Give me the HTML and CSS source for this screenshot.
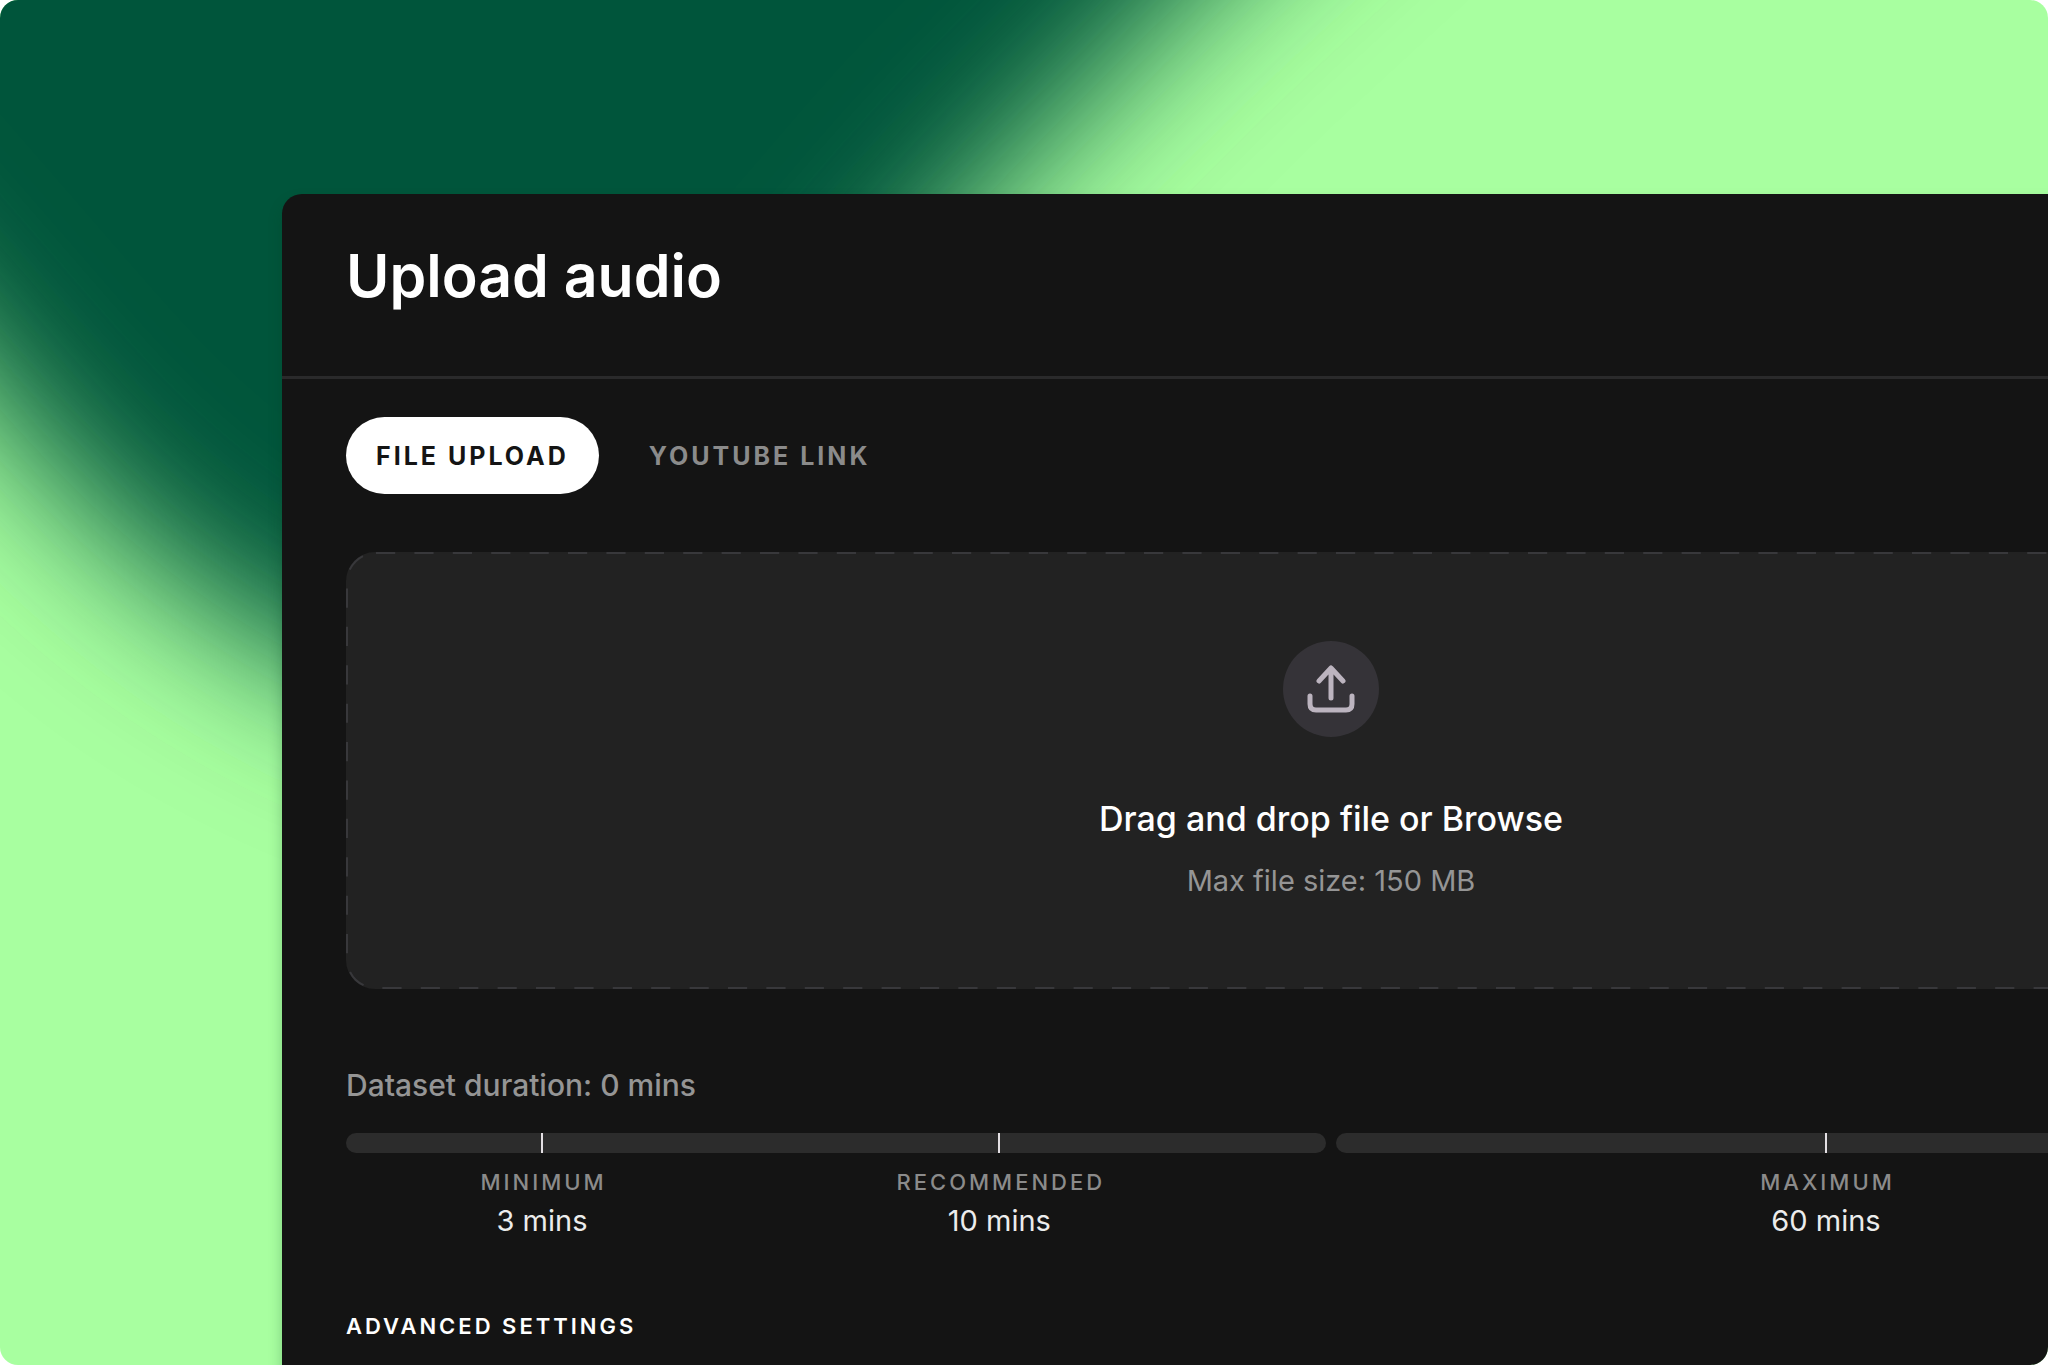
FILE: index.html
```html
<!DOCTYPE html>
<html lang="en">
<head>
    <meta charset="UTF-8">
    <meta name="viewport" content="width=device-width, initial-scale=1.0">
    <title>Upload audio</title>
    <link rel="stylesheet" href="styles.css">
</head>
<body>
    <div class="stage">
        <svg class="backdrop" aria-hidden="true">
            <defs>
                <filter id="soften" filterUnits="userSpaceOnUse" x="-900" y="-800" width="3000" height="2400">
                    <feGaussianBlur stdDeviation="76"/>
                </filter>
            </defs>
            <path d="M-700 -600 H1830 L1180 0 L985 195 L740 480 L680 730 H480 Q300 680 150 560 Q70 495 0 410 L-200 180 L-700 -300 Z" fill="#00543a" filter="url(#soften)"/>
        </svg>

        <main class="panel">
            <header class="panel-header">
                <h1>Upload audio</h1>
            </header>

            <div class="panel-body">
                <div class="tabs" role="tablist">
                    <button class="tab active" type="button" role="tab" aria-selected="true">File upload</button>
                    <button class="tab" type="button" role="tab" aria-selected="false">YouTube link</button>
                </div>

                <button class="dropzone" type="button">
                    <svg class="dropzone-border" aria-hidden="true">
                        <rect x="0" y="0" width="100%" height="100%" rx="29"/>
                    </svg>
                    <span class="upload-icon">
                        <svg viewBox="0 0 48 48" aria-hidden="true">
                            <path d="M24 33V4M12 16L24 3L36 16M3 31V39Q3 45 9 45H39Q45 45 45 39V31"/>
                        </svg>
                    </span>
                    <span class="dropzone-title">Drag and drop file or Browse</span>
                    <span class="dropzone-hint">Max file size: 150 MB</span>
                </button>

                <section class="duration">
                    <h2>Dataset duration: 0 mins</h2>
                    <div class="scale">
                        <div class="segment">
                            <div class="bar short"><i class="tick"></i><i class="tick"></i></div>
                            <div class="marks short">
                                <div class="mark"><span class="mark-label">Minimum</span><span class="mark-value">3 mins</span></div>
                                <div class="mark"><span class="mark-label">Recommended</span><span class="mark-value">10 mins</span></div>
                            </div>
                        </div>
                        <div class="segment">
                            <div class="bar"><i class="tick"></i></div>
                            <div class="marks">
                                <div class="mark"><span class="mark-label">Maximum</span><span class="mark-value">60 mins</span></div>
                            </div>
                        </div>
                    </div>
                </section>

                <h2 class="advanced">Advanced settings</h2>
            </div>
        </main>
    </div>
</body>
</html>
```
FILE: styles.css
```css
* {
    margin: 0;
    padding: 0;
    box-sizing: border-box;
}

body {
    font-family: Inter, "Liberation Sans", sans-serif;
    background: #fff;
    color: #fff;
}

.stage {
    position: relative;
    height: 100vh;
    padding: 194px 0 0 282px;
    background: #a8ffa0;
    border-radius: 18px;
    overflow: hidden;
}

.backdrop {
    position: absolute;
    inset: 0;
    width: 100%;
    height: 100%;
}

/* the panel runs off the right and bottom edges of the stage */
.panel {
    position: relative;
    min-height: 100vh;
    margin-right: -332px;
    background: #141414;
    border-radius: 20px;
    box-shadow: 0 8px 14px rgba(0, 60, 30, 0.25);
}

.panel-header {
    padding: 48px 64px 66px;
    border-bottom: 3px solid #2a2a2b;
}

h1 {
    font-size: 59px;
    font-weight: 600;
    line-height: 68px;
}

.panel-body {
    padding: 38px 64px;
}

.tabs {
    display: flex;
    gap: 20px;
    margin-bottom: 58px;
}

.tab {
    height: 77px;
    padding: 0 30px;
    border: none;
    border-radius: 39px;
    background: none;
    color: #8b8b8b;
    font-family: inherit;
    font-size: 25px;
    font-weight: 700;
    letter-spacing: 3px;
    text-transform: uppercase;
    cursor: pointer;
}

.tab.active {
    background: #fff;
    color: #141414;
}

.dropzone {
    position: relative;
    display: flex;
    flex-direction: column;
    align-items: center;
    width: 100%;
    height: 437px;
    padding-top: 89px;
    border: none;
    border-radius: 29px;
    background: #222;
    font-family: inherit;
    cursor: pointer;
}

.dropzone-border {
    position: absolute;
    inset: 1px;
    width: calc(100% - 2px);
    height: calc(100% - 2px);
    overflow: visible;
}

.dropzone-border rect {
    fill: none;
    stroke: #38383b;
    stroke-width: 2;
    stroke-dasharray: 19.2 19.2;
}

.upload-icon {
    display: flex;
    align-items: center;
    justify-content: center;
    width: 96px;
    height: 96px;
    margin-bottom: 60px;
    border-radius: 50%;
    background: #353338;
}

.upload-icon svg {
    width: 48px;
    height: 48px;
    fill: none;
    stroke: #bcb4bf;
    stroke-width: 5;
    stroke-linecap: round;
    stroke-linejoin: round;
}

.dropzone-title {
    margin-bottom: 20px;
    color: #fff;
    font-size: 34px;
    font-weight: 500;
    line-height: 44px;
}

.dropzone-hint {
    color: #959595;
    font-size: 29px;
    line-height: 40px;
}

.duration {
    margin-top: 76px;
}

.duration h2 {
    margin-bottom: 28px;
    color: #959595;
    font-size: 30px;
    font-weight: 500;
    line-height: 40px;
}

.scale {
    display: flex;
    gap: 10px;
}

.segment {
    flex: 1;
}

.bar,
.marks {
    display: grid;
    justify-items: center;
}

/* one fr per minute: ticks sit at 3 and 10 of 15 */
.short {
    grid-template-columns: 6fr 8fr 1fr;
}

.bar {
    height: 20px;
    border-radius: 10px;
    background: #2c2c2c;
}

.tick {
    width: 2px;
    height: 20px;
    background: #e4e0e4;
}

.marks {
    margin-top: 14px;
}

.mark {
    display: flex;
    flex-direction: column;
    align-items: center;
    gap: 4px;
}

.mark-label,
.advanced {
    font-size: 22px;
    font-weight: 600;
    line-height: 30px;
    letter-spacing: 3px;
    text-transform: uppercase;
}

/* balances the trailing letter space so labels centre on their tick */
.mark-label {
    padding-left: 3px;
    color: #8b8b8b;
    font-weight: 500;
}

.mark-value {
    color: #ececec;
    font-size: 29px;
    line-height: 40px;
}

.advanced {
    margin-top: 70px;
}
```
